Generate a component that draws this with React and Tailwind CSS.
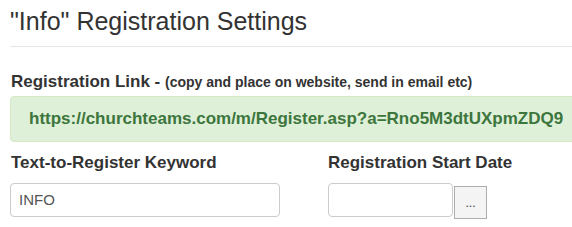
export default function App() {
  return (
    <div className="w-[572px] h-[227px] overflow-hidden bg-white pl-[10px] text-[#333]" style={{ fontFamily: '"Liberation Sans", Arial, sans-serif' }}>
      <h1 className="pt-[8px] text-[25px] leading-[27px] font-normal text-[#333]">"Info" Registration Settings</h1>
      <div className="mt-[11px] h-px bg-[#e5e5e5]"></div>
      <div className="mt-[25px] pl-px text-[17px] leading-[19px] font-bold text-[#333] whitespace-nowrap">
        Registration Link - <span className="text-[14px]">(copy and place on website, send in email etc)</span>
      </div>
      <div className="mt-[4px] h-[46px] w-[600px] flex items-center pl-[18px] rounded-[4px] border border-[#d6e9c6] bg-[#dff0d8] text-[#3c763d] text-[17px] font-bold">
        https://churchteams.com/m/Register.asp?a=Rno5M3dtUXpmZDQ9
      </div>
      <div className="flex mt-[11px]">
        <div className="w-[318px]">
          <div className="pl-px text-[17px] leading-[19px] font-bold">Text-to-Register Keyword</div>
          <div className="mt-[11px] w-[270px] h-[34px] rounded-[4px] border border-[#ccc] flex items-center pl-[8px] text-[15px] text-[#555]">INFO</div>
        </div>
        <div>
          <div className="text-[17px] leading-[19px] font-bold">Registration Start Date</div>
          <div className="mt-[11px] flex items-start">
            <div className="w-[125px] h-[34px] rounded-[4px] border border-[#ccc]"></div>
            <div className="ml-px mt-[3px] w-[33px] h-[33px] border border-[#adadad] bg-[#f4f4f4] flex items-end justify-center text-[12px] text-[#333] leading-none pb-[9px]">...</div>
          </div>
        </div>
      </div>
    </div>
  );
}
